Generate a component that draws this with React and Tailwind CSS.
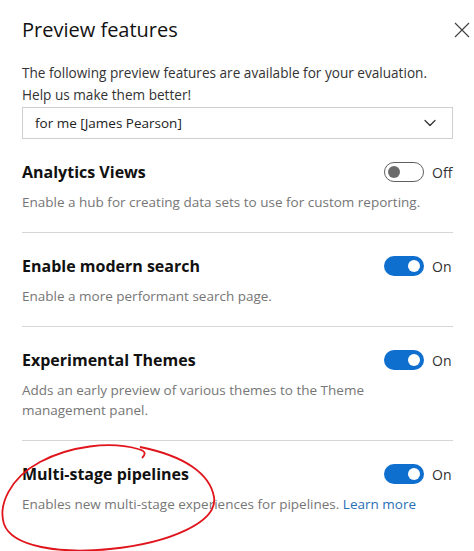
import { ChevronDown } from 'lucide-react'

const features = [
  {
    title: 'Analytics Views',
    desc: 'Enable a hub for creating data sets to use for custom reporting.',
    on: false,
  },
  {
    title: 'Enable modern search',
    desc: 'Enable a more performant search page.',
    on: true,
  },
  {
    title: 'Experimental Themes',
    desc: 'Adds an early preview of various themes to the Theme management panel.',
    on: true,
  },
  {
    title: 'Multi-stage pipelines',
    desc: 'Enables new multi-stage experiences for pipelines.',
    on: true,
    link: 'Learn more',
  },
]

const Toggle = ({ on }) => (
  <div className='flex items-center gap-2'>
    {on ? (
      <div className='w-10 h-5 rounded-full bg-[#0f6fcf] flex items-center justify-end pr-[4px]'>
        <div className='w-3 h-3 rounded-full bg-white'></div>
      </div>
    ) : (
      <div className='w-10 h-5 rounded-full border border-[#5f5f5f] bg-white flex items-center pl-[3px]'>
        <div className='w-3 h-3 rounded-full bg-[#6b6b6b]'></div>
      </div>
    )}
    <span className='w-[21px] text-[14px] text-[#333]'>{on ? 'On' : 'Off'}</span>
  </div>
)

const Feature = ({ item, last }) => (
  <div className={`pt-[21px] pb-[20px] ${last ? '' : 'border-b border-[#d6d6d6]'}`}>
    <div className='flex items-center justify-between h-6'>
      <h3 className='text-[16px] font-bold text-[#111] leading-6'>{item.title}</h3>
      <Toggle on={item.on} />
    </div>
    <p className='mt-2 max-w-[410px] text-[13.5px] leading-5 text-[#767676]'>
      {item.desc}
      {item.link && <span className='text-[#2a6fb5]'> {item.link}</span>}
    </p>
  </div>
)

const App = () => {
  return (
    <div
      className='relative w-[474px] h-[551px] overflow-hidden bg-white pl-[22px] pr-[21px]'
      style={{ fontFamily: '"Open Sans", "Noto Sans", sans-serif' }}
    >
      <div className='flex items-start justify-between pt-[16px] -mr-[21px] pr-[4px]'>
        <h2 className='text-[20px] leading-7 text-[#111]'>Preview features</h2>
        <svg width='16' height='16' viewBox='0 0 16 16' className='mt-[6px]'>
          <path d='M1 1 L15 15 M15 1 L1 15' stroke='#444' strokeWidth='1.2' fill='none' />
        </svg>
      </div>
      <p className='mt-[18px] text-[13.6px] leading-[22px] text-[#333]'>
        The following preview features are available for your evaluation. Help us make them better!
      </p>
      <div className='mt-px h-8 border border-[#cfcfcf] flex items-center justify-between pl-3 pr-3'>
        <span className='text-[13.5px] text-[#222]'>for me [James Pearson]</span>
        <ChevronDown size={20} strokeWidth={1.5} color='#333' />
      </div>
      {features.map((item, i) => (
        <Feature key={item.title} item={item} last={i === features.length - 1} />
      ))}
      <svg className='absolute left-0 top-0 pointer-events-none' width='474' height='551' viewBox='0 0 474 551'>
        <path
          d='M142 458 C146 454 146 451 138 449 C110 441 70 446 40 462 C10 478 -2 505 4 524 C12 547 60 554 110 549 C170 543 218 522 214 497 C210 474 185 456 140 447'
          stroke='#e0141b'
          strokeWidth='1.8'
          fill='none'
        />
      </svg>
    </div>
  )
}

export default App
